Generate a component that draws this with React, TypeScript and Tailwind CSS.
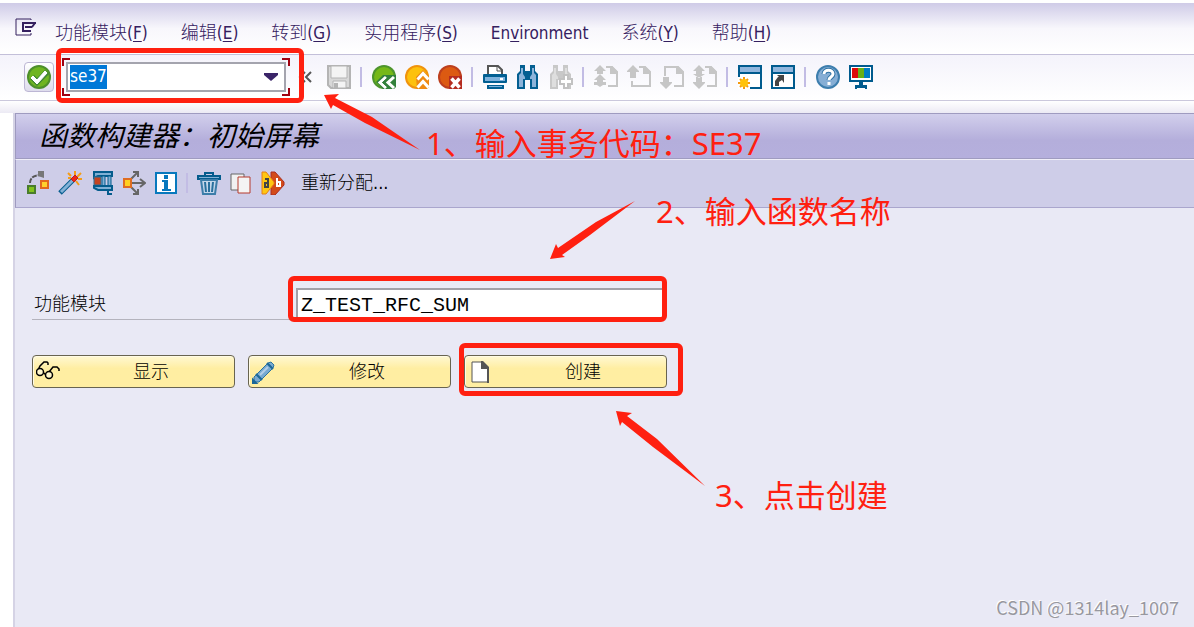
import type { ReactNode } from "react";

const fontUi = "font-['DejaVu_Sans_Condensed','Noto_Sans_CJK_SC',sans-serif]";
const fontCjk = "font-['Noto_Sans_CJK_SC',sans-serif]";

const Icon = ({ children }: { children: ReactNode }) => (
  <svg viewBox="0 0 24 24" className="h-6 w-6 shrink-0" fill="none" aria-hidden="true">
    {children}
  </svg>
);

const CheckIcon = () => (
  <Icon>
    <circle cx="12" cy="12" r="12" fill="#4d8f2b" />
    <circle cx="12" cy="12" r="10" fill="#6fb520" />
    <path d="M3 14l4-4 3 3 8-8 4 4-12 12z" fill="#3f8534" />
    <path d="M4 13l2-2 4 4 8-9 2 2-10 11z" fill="#fff" stroke="#fff" />
  </Icon>
);

const SaveIcon = () => (
  <Icon>
    <path d="M1 1h22v22H4l-3-3z" fill="#d8d8d8" stroke="#b4b4b4" strokeWidth="2" />
    <path d="M4 1h16v12H4z" fill="#f4f4f4" stroke="#b4b4b4" />
    <path d="M6 16h13v7H6z" fill="#f4f4f4" stroke="#b4b4b4" />
    <path d="M7 18h4v5H7z" fill="#b4b4b4" />
  </Icon>
);

const BackIcon = () => (
  <Icon>
    <circle cx="12" cy="12" r="12" fill="#4d942d" />
    <circle cx="12" cy="12" r="10" fill="#75b818" />
    <path d="M4 17l7-7h13v12l-2 2H11z" fill="#32803b" />
    <path d="M14 12l-6 5.500 6 5.500M22 12l-6 5.500 6 5.500" stroke="#fff" strokeWidth="3" />
    <path d="M15.500 13l-5 4.500 5 4.500" stroke="#32803b" />
  </Icon>
);

const ExitIcon = () => (
  <Icon>
    <circle cx="12" cy="12" r="12" fill="#f0930d" />
    <circle cx="12" cy="12" r="10" fill="#fdc10d" />
    <path d="M11 12l7-7 6 7v10l-2 2H12z" fill="#ee8a12" />
    <path d="M12.500 14.500l5.500-6 5.500 6M12.500 22.500l5.500-6 5.500 6" stroke="#fff" strokeWidth="3" />
  </Icon>
);

const CancelIcon = () => (
  <Icon>
    <circle cx="12" cy="12" r="12" fill="#bd3f1d" />
    <circle cx="12" cy="12" r="10" fill="#dc5a12" />
    <path d="M11 11h13v13H11z" fill="#b42c20" />
    <path d="M13.500 13.500l8 9m0-9l-8 9" stroke="#fff" strokeWidth="3.500" />
  </Icon>
);

const PrintIcon = () => (
  <Icon>
    <path d="M5 10V1h10l4 4v5" fill="#fff" stroke="#555" strokeWidth="2" />
    <path d="M14 1v5h5" stroke="#555" />
    <rect y="9" width="24" height="9" rx="1" fill="#015f92" />
    <path d="M2 12h20v4H2z" fill="#7fb2dc" />
    <path d="M17 13h3v2h-3z" fill="#fff" />
    <path d="M4 20h17v4H4z" fill="#015f92" />
    <path d="M6 21h13v1H6z" fill="#7fb2dc" />
  </Icon>
);

const FindIcon = ({ muted = false }: { muted?: boolean }) => {
  const dark = muted ? "#c8c8c8" : "#045f91";
  const light = muted ? "#dedede" : "#8db4da";
  return (
    <Icon>
      <path d="M4 0h5v6h5V0h5v6l3 3v15h-8v-9H9v9H1V9l3-3z" fill={dark} />
      <path d="M5 3h2v6l2 3v2H7v8H3V10l2-2zM16 3h2v5l2 2v12h-4v-8h-2v-2l2-3z" fill={light} />
      {muted ? (
        <path d="M15 10h4v4h4v5h-4v4h-4v-4h-4v-5h4z" fill="#fff" stroke="#c2c2c2" strokeWidth="2" />
      ) : null}
    </Icon>
  );
};

const pageArrows = {
  first: "M6 0l6 6H9v3H3V6H0zM6 9l6 6H9v2h3v3H9l-3 2-3-2H0v-3h3v-2H0z",
  previous: "M6 0l6 6v1H9v6H3V7H0V6z",
  next: "M6 24l6-6v-1H9v-5H3v5H0v1z",
  last: "M6 0l6 6H9v3h3l-6 4-6-4h3V6H0zM6 24l6-6v-1H9v-5H3v5H0v1z"
};

const PageIcon = ({ kind }: { kind: keyof typeof pageArrows }) => (
  <Icon>
    <path d="M12 2h6l5 5v14h-9" stroke="#c6c6c6" strokeWidth="2" />
    {kind === "previous" ? <path d="M14 21H5v-5" stroke="#c6c6c6" strokeWidth="2" /> : null}
    {kind === "next" ? <path d="M12 2H5v9" stroke="#c6c6c6" strokeWidth="2" /> : null}
    <path d="M16 1h2l6 6v2h-8z" fill="#c6c6c6" />
    <path d={pageArrows[kind]} fill="#c6c6c6" />
  </Icon>
);

const WindowIcon = ({ shortcut = false }: { shortcut?: boolean }) => (
  <Icon>
    <path d="M1 1h22v22H1z" fill="#fff" stroke="#005b8e" strokeWidth="2" />
    <path d="M2 2h20v5H2z" fill="#91b6dd" />
    <path d="M1 8h22" stroke="#005b8e" strokeWidth="2" />
    {shortcut ? (
      <path d="M4 21v-5l3-4h1l-2-2h7v8l-2-3-3 2v4z" fill="#444" />
    ) : (
      <>
        <path d="M0 12h12v12H0z" fill="#fff" />
        <path d="M6 12v12M0 18h12M2 14l8 8m0-8l-8 8" stroke="#f5980c" strokeWidth="2" />
        <circle cx="6" cy="18" r="4" fill="#ffc20a" />
      </>
    )}
  </Icon>
);

const HelpIcon = () => (
  <Icon>
    <circle cx="12" cy="12" r="11" fill="#86aed5" stroke="#3d7eae" strokeWidth="2" />
    <path d="M8 9c0-5 9-5 9 0 0 3-4 3-4 6" stroke="#2f73a5" strokeWidth="5" />
    <path d="M8 9c0-5 9-5 9 0 0 3-4 3-4 6M13 17v3" stroke="#fff" strokeWidth="3" />
  </Icon>
);

const MonitorIcon = () => (
  <Icon>
    <path d="M1 1h22v15H1z" fill="#fff" stroke="#005b8e" strokeWidth="2" />
    <path d="M3 3h6v10H3z" fill="#dd0a0a" />
    <path d="M9 3h6v10H9z" fill="#68b017" />
    <path d="M15 3h6v10h-6z" fill="#007dc5" />
    <path d="M10 16h4v4h4v4h-2v-1H8v1H6v-4h4z" fill="#005b8e" />
  </Icon>
);

const OtherObjectIcon = () => (
  <Icon>
    <path d="M4 12c0-6 5-8 12-8" stroke="#555" strokeWidth="2" strokeDasharray="5 1" />
    <path d="M12 0h6v7l-6-2z" fill="#777" />
    <path d="M2 15h7v7H2z" fill="#82c41c" stroke="#4a7d2c" strokeWidth="2" />
    <path d="M15 10h7v7h-7z" fill="#ffd12b" stroke="#e2681d" strokeWidth="2" />
  </Icon>
);

const WandIcon = () => (
  <Icon>
    <path d="M2 22L16 8" stroke="#065d8e" strokeWidth="5" />
    <path d="M3 21L15 9" stroke="#83b1d7" strokeWidth="3" />
    <path d="M10 2l3 3M17 0v4M23 2l-4 4M20 8h4M18 10l3 4M10 7h3" stroke="#f59d17" strokeWidth="2" />
    <path d="M17 4l3 3-4 4-3-3z" fill="#ed2718" stroke="#bd2020" />
  </Icon>
);

const CheckObjectIcon = () => (
  <Icon>
    <path d="M4 1h18v4H8L4 7z" fill="#81b0d5" stroke="#055c8d" strokeWidth="2" />
    <path d="M12 5h3v11h-3zM18 5h3v11h-3z" fill="#81b0d5" stroke="#055c8d" />
    <path d="M4 6h7v8H4z" fill="#c54320" stroke="#2b7099" />
    <path d="M4 15h18v4H8l-4-2z" fill="#81b0d5" stroke="#055c8d" strokeWidth="2" />
    <path d="M14 19h4v4h4" stroke="#055c8d" strokeWidth="2" />
  </Icon>
);

const WhereUsedIcon = () => (
  <Icon>
    <path d="M9 8l6-6M9 16l6 6M10 12h13" stroke="#666" strokeWidth="2" />
    <path d="M11 1h5v5M11 23h5v-5M18 8l5 4-5 4" stroke="#666" strokeWidth="2" />
    <path d="M2 8h7v8H2z" fill="#ffd020" stroke="#df6c21" strokeWidth="2" />
  </Icon>
);

const InfoIcon = () => (
  <Icon>
    <path d="M2 2h20v20H2z" fill="#fff" stroke="#0879bd" strokeWidth="2" />
    <path d="M10 4h4v4h-4zM8 9h6v9h3v2H8v-2h2v-7H8z" fill="#0677bd" />
  </Icon>
);

const TrashIcon = () => (
  <Icon>
    <path d="M8 4V2h8v2" stroke="#055c8d" strokeWidth="2" />
    <path d="M1 5h22v3H1z" fill="#82b0d5" stroke="#055c8d" strokeWidth="2" />
    <path d="M4 9h16l-2 14H6z" fill="#c3d6ea" stroke="#3c7da9" strokeWidth="2" />
    <path d="M8 11l1 10M12 11v10M16 11l-1 10" stroke="#286f9d" strokeWidth="2" />
  </Icon>
);

const CopyIcon = () => (
  <Icon>
    <path d="M2 3h13v16H2z" fill="#f1f1f1" stroke="#666" />
    <path d="M9 6h12v16H9z" fill="#f4f4f4" stroke="#b63b2c" />
  </Icon>
);

const RenameIcon = () => (
  <Icon>
    <path d="M10 1h4l9 10v3l-9 10h-4z" fill="#d34a18" stroke="#aa2d20" />
    <path d="M1 1h4l8 10v2L5 23H1z" fill="#ffc711" stroke="#e67e19" />
    <path d="M4 8h3v8H4v-4h3" stroke="#444" strokeWidth="2" />
    <path d="M16 7v8h3v-4h-3" stroke="#fff" strokeWidth="2" />
  </Icon>
);

const GlassesIcon = () => (
  <Icon>
    <path d="M2 10l2-4 4-4h3l1 1v2M13 12l4-5h4l2 2v2M8 13l2 2" stroke="#000" strokeWidth="1.500" />
    <circle cx="4" cy="12" r="3.500" fill="#fff7cc" stroke="#000" strokeWidth="1.500" />
    <circle cx="13" cy="15" r="3.500" fill="#fff7cc" stroke="#000" strokeWidth="1.500" />
  </Icon>
);

const PencilIcon = () => (
  <Icon>
    <path d="M2 22v-5L16 3l3-1 3 3-1 3L7 22z" fill="#78a9d1" stroke="#2a739f" />
    <path d="M1 23v-3l3 3zM15 3l6 6M4 14l6 6" stroke="#1b6798" strokeWidth="2" />
    <path d="M8 15l8-8" stroke="#b4cee8" strokeWidth="2" />
  </Icon>
);

const NewIcon = () => (
  <Icon>
    <path d="M4 2h9l7 6v14H4z" fill="#fff" stroke="#555" />
    <path d="M13 1h2l6 6v2h-8z" fill="#555" />
    <path d="M20 8v15" stroke="#555" strokeWidth="2" />
  </Icon>
);

const Separator = () => <span className="h-5 w-[3px] shrink-0 border-l-2 border-[#c2bce4]" />;

const IconButton = ({ label, children }: { label: string; children: ReactNode }) => (
  <button type="button" aria-label={label} className="shrink-0">
    {children}
  </button>
);

const menus = [
  { name: "功能模块", before: "(", key: "F", after: ")" },
  { name: "编辑", before: "(", key: "E", after: ")" },
  { name: "转到", before: "(", key: "G", after: ")" },
  { name: "实用程序", before: "(", key: "S", after: ")" },
  { name: "", before: "En", key: "v", after: "ironment" },
  { name: "系统", before: "(", key: "Y", after: ")" },
  { name: "帮助", before: "(", key: "H", after: ")" }
];

const MenuBar = () => (
  <nav className="flex h-[52px] items-center border-b border-[#c3bfd9] bg-linear-to-b from-[#cfcbe7] via-[#f8f7fc] via-50% to-white pb-1 pl-[15px] pt-3 text-[#35205f]">
    <svg viewBox="0 0 24 18" className="mb-3 h-[18px] w-6 shrink-0" fill="none" aria-hidden="true">
      <path d="M16 2V1H1v16h15v-2" stroke="#35205f" />
      <path d="M7 5h14M8 5v8h8M10 9h7M17 9l3-4" stroke="#35205f" strokeWidth="2" />
    </svg>
    <ul className="ml-4 flex gap-[33px] text-[17px] leading-6">
      {menus.map(({ name, before, key, after }) => (
        <li key={key}>
          <button type="button" className="whitespace-nowrap">
            <span className="text-lg font-light leading-6">{name}</span>
            {before}
            <span className="underline underline-offset-2">{key}</span>
            {after}
          </button>
        </li>
      ))}
    </ul>
  </nav>
);

const CommandField = () => (
  <div className="relative ml-3 flex h-[30px] w-[220px] shrink-0 items-center border-2 border-[#a4a4ae] bg-white">
    <input
      aria-label="事务代码"
      autoFocus
      defaultValue="se37"
      onFocus={(event) => event.target.select()}
      className="h-6 w-full min-w-0 pl-[2px] text-[17px] text-black outline-none selection:bg-[#0078d7] selection:text-white"
    />
    <button type="button" aria-label="历史记录" className="px-[6px]">
      <svg viewBox="0 0 14 8" className="h-2 w-[14px]" aria-hidden="true">
        <path d="M0 0h14v2L7 8 0 2z" fill="#3a2468" />
      </svg>
    </button>
    <span className="absolute -left-[6px] -top-[6px] h-2 w-2 border-l-2 border-t-2 border-[#a00010]" />
    <span className="absolute -right-[6px] -top-[6px] h-2 w-2 border-r-2 border-t-2 border-[#a00010]" />
    <span className="absolute -bottom-[6px] -left-[6px] h-2 w-2 border-b-2 border-l-2 border-[#a00010]" />
    <span className="absolute -bottom-[6px] -right-[6px] h-2 w-2 border-b-2 border-r-2 border-[#a00010]" />
    <span className="pointer-events-none absolute -bottom-[13px] -left-3 -right-5 -top-4 rounded-md border-[5px] border-[#ff2010]" />
  </div>
);

const SystemToolbar = () => (
  <div className="flex h-[46px] items-center border-b border-[#cbc8dc] bg-linear-to-b from-[#f4f3fb] to-white pb-px pl-6">
    <button
      type="button"
      aria-label="回车"
      className="rounded-sm border border-[#bcb6d4] bg-linear-to-b from-white to-[#dedcec] p-[2px]"
    >
      <CheckIcon />
    </button>
    <CommandField />
    <button type="button" aria-label="收起" className="ml-3 shrink-0">
      <svg viewBox="0 0 14 12" className="h-3 w-[14px]" fill="none" aria-hidden="true">
        <path d="M7 1L2 6l5 5M13 1L8 6l5 5" stroke="#555" strokeWidth="2" />
      </svg>
    </button>
    <div className="ml-[15px] flex items-center gap-[9px]">
      <IconButton label="保存"><SaveIcon /></IconButton>
      <Separator />
      <IconButton label="返回"><BackIcon /></IconButton>
      <IconButton label="退出"><ExitIcon /></IconButton>
      <IconButton label="取消"><CancelIcon /></IconButton>
      <Separator />
      <IconButton label="打印"><PrintIcon /></IconButton>
      <IconButton label="查找"><FindIcon /></IconButton>
      <IconButton label="继续查找"><FindIcon muted /></IconButton>
      <Separator />
      <IconButton label="首页"><PageIcon kind="first" /></IconButton>
      <IconButton label="上一页"><PageIcon kind="previous" /></IconButton>
      <IconButton label="下一页"><PageIcon kind="next" /></IconButton>
      <IconButton label="末页"><PageIcon kind="last" /></IconButton>
      <Separator />
      <IconButton label="新建会话"><WindowIcon /></IconButton>
      <IconButton label="生成快捷方式"><WindowIcon shortcut /></IconButton>
      <Separator />
      <IconButton label="帮助"><HelpIcon /></IconButton>
      <IconButton label="定制布局"><MonitorIcon /></IconButton>
    </div>
  </div>
);

const ApplicationToolbar = () => (
  <div className="flex h-[49px] items-center gap-2 border-b border-l border-t border-b-[#aaa6cd] border-l-[#9f9bc0] border-t-[#efedf8] bg-[#cecde8] pb-[2px] pl-[10px]">
    <IconButton label="其他对象"><OtherObjectIcon /></IconButton>
    <IconButton label="激活"><WandIcon /></IconButton>
    <IconButton label="检查"><CheckObjectIcon /></IconButton>
    <IconButton label="使用处清单"><WhereUsedIcon /></IconButton>
    <IconButton label="信息"><InfoIcon /></IconButton>
    <Separator />
    <IconButton label="删除"><TrashIcon /></IconButton>
    <IconButton label="复制"><CopyIcon /></IconButton>
    <IconButton label="重命名"><RenameIcon /></IconButton>
    <button type="button" className="ml-2 whitespace-nowrap text-lg font-light leading-6 text-black">
      重新分配...
    </button>
  </div>
);

const ActionButton = ({ icon, label }: { icon: ReactNode; label: string }) => (
  <button
    type="button"
    className="flex h-[33px] w-[203px] items-center rounded-sm border border-[#686450] bg-linear-to-b from-[#fff8d2] via-[#ffeea2] via-40% to-[#ffeea2] pl-[3px] shadow-[inset_1px_1px_0_#fffbe4]"
  >
    {icon}
    <span className="flex-1 pl-2 text-lg font-light leading-6 text-black">{label}</span>
  </button>
);

const Note = ({ className, children }: { className: string; children: ReactNode }) => (
  <p
    className={`absolute whitespace-nowrap font-['Noto_Sans','Noto_Sans_CJK_SC',sans-serif] text-[31px] leading-10 text-[#ff2010] ${className}`}
  >
    {children}
  </p>
);

const Notes = () => (
  <div className="pointer-events-none absolute left-0 top-0">
    <svg viewBox="0 0 720 500" className="h-[500px] w-[720px] max-w-none" fill="#ff2010" aria-hidden="true">
      <path d="M324 95l15-1-4 4 37 19 48 33-55-27-32-18-2 4z" />
      <path d="M550 259l6-15 2 4 38-26 39-21-45 34-28 20 3 2z" />
      <path d="M616 411l16 2-5 3 30 23 48 47-52-39-31-25-2 4z" />
    </svg>
    <Note className="left-[426px] top-[123px]">1、输入事务代码：SE37</Note>
    <Note className="left-[656px] top-[191px]">2、输入函数名称</Note>
    <Note className="left-[715px] top-[475px]">3、点击创建</Note>
  </div>
);

export default function App() {
  return (
    <div className={`relative flex min-h-screen flex-col overflow-hidden bg-white pt-[3px] ${fontUi}`}>
      <MenuBar />
      <SystemToolbar />
      <div className="h-3 bg-linear-to-b from-white to-[#eceaf4]" />
      <main className="ml-[13px] flex flex-1 flex-col border-l-2 border-[#d5d3e5] bg-[#e9e9f5]">
        <header className="flex h-[46px] items-center border-b border-l border-t border-[#9f9bc0] bg-linear-to-b from-[#d2cfec] via-[#b4aedb] via-60% to-[#b5afdd] pb-1 pl-[23px]">
          <h1 className={`whitespace-nowrap text-[28px] font-normal italic leading-9 text-black ${fontCjk}`}>
            函数构建器：初始屏幕
          </h1>
        </header>
        <ApplicationToolbar />
        <form className="pl-[17px] pt-20" onSubmit={(event) => event.preventDefault()}>
          <div className="flex items-stretch">
            <label
              htmlFor="function-module"
              className="w-[264px] border-b border-[#b4b3bd] pl-[2px] pt-px text-lg font-light leading-[30px] text-black"
            >
              功能模块
            </label>
            <div className="relative w-[368px]">
              <input
                id="function-module"
                defaultValue="Z_TEST_RFC_SUM"
                className="h-[31px] w-full border-l-2 border-t-2 border-[#a2a0a8] bg-white pl-[3px] pt-[2px] font-['Liberation_Mono',monospace] text-xl leading-6 text-black outline-none"
              />
              <span className="pointer-events-none absolute -bottom-[2px] -left-2 -right-[3px] -top-3 rounded-md border-[5px] border-[#ff2010]" />
            </div>
          </div>
          <div className="mt-[35px] flex gap-[13px]">
            <ActionButton icon={<GlassesIcon />} label="显示" />
            <ActionButton icon={<PencilIcon />} label="修改" />
            <div className="relative">
              <ActionButton icon={<NewIcon />} label="创建" />
              <span className="pointer-events-none absolute -bottom-2 -left-[5px] -right-4 -top-3 rounded-md border-[5px] border-[#ff2010]" />
            </div>
          </div>
        </form>
      </main>
      <Notes />
      <p
        className={`absolute bottom-2 right-[15px] text-lg leading-6 text-[#98989f] [text-shadow:-1px_-1px_0_#fff] ${fontCjk}`}
      >
        CSDN @1314lay_1007
      </p>
    </div>
  );
}
